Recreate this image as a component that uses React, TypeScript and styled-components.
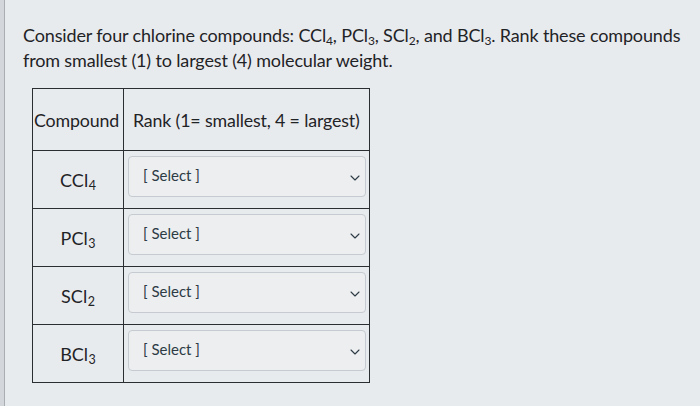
import React from "react";
import styled, { createGlobalStyle } from "styled-components";
import { ChevronDown } from "lucide-react";

const GlobalStyle = createGlobalStyle`
  html, body {
    margin: 0;
    padding: 0;
    background: #e8ebee;
  }
  body {
    font-family: Lato, "Open Sans", sans-serif;
    color: #1f2326;
  }
`;

const compounds = [
  { symbol: "CCl", sub: "4" },
  { symbol: "PCl", sub: "3" },
  { symbol: "SCl", sub: "2" },
  { symbol: "BCl", sub: "3" },
];

const App = () => {
  return (
    <Page>
      <GlobalStyle />
      <Question>
        Consider four chlorine compounds: CCl<sub>4</sub>, PCl<sub>3</sub>,
        SCl<sub>2</sub>, and BCl<sub>3</sub>. Rank these compounds from
        smallest (1) to largest (4) molecular weight.
      </Question>
      <Table>
        <thead>
          <tr>
            <HeadCell className="compound">Compound</HeadCell>
            <HeadCell className="rank">Rank (1= smallest, 4 = largest)</HeadCell>
          </tr>
        </thead>
        <tbody>
          {compounds.map((c) => (
            <tr key={c.symbol}>
              <NameCell>
                {c.symbol}
                <sub>{c.sub}</sub>
              </NameCell>
              <SelectCell>
                <SelectBox>
                  <span>[ Select ]</span>
                  <ChevronDown size={16} strokeWidth={1.6} />
                </SelectBox>
              </SelectCell>
            </tr>
          ))}
        </tbody>
      </Table>
    </Page>
  );
};

const Page = styled.div`
  width: 700px;
  height: 406px;
  box-sizing: border-box;
  padding: 23px 0 0 19px;
  border-left: 4px solid #d3d7db;
  box-shadow: inset 1px 0 0 #a9aeb3;
  overflow: hidden;
`;

const Question = styled.p`
  margin: 0;
  width: 670px;
  font-size: 18px;
  line-height: 25px;
  letter-spacing: -0.15px;
  > sub {
    font-size: 12px;
    vertical-align: -3px;
    line-height: 0;
  }
`;

const Table = styled.table`
  margin: 15px 0 0 9px;
  border-collapse: collapse;
  width: 338px;
  border: 1.5px solid #2b2e31;
  td,
  th {
    border: 1.5px solid #2b2e31;
  }
`;

const HeadCell = styled.th`
  height: 61px;
  font-size: 17.8px;
  font-weight: 400;
  text-align: left;
  padding: 0;
  letter-spacing: -0.15px;
  white-space: nowrap;
  &.compound {
    width: 89px;
    padding-left: 1px;
  }
  &.rank {
    padding-left: 9px;
  }
`;

const NameCell = styled.td`
  height: 58px;
  text-align: center;
  font-size: 18px;
  padding: 0;
  box-sizing: border-box;
  > sub {
    font-size: 12.5px;
    vertical-align: -3px;
    line-height: 0;
    margin-left: 0.5px;
  }
`;

const SelectCell = styled.td`
  padding: 5px 3px 11px 4px;
  vertical-align: top;
`;

const SelectBox = styled.div`
  height: 41px;
  box-sizing: border-box;
  border: 1px solid #c5cbd0;
  border-radius: 4px;
  background: #eceef0;
  display: flex;
  align-items: center;
  justify-content: space-between;
  padding: 0 2px 0 14px;
  font-size: 15px;
  color: #2d3b45;
  > span {
    margin-top: -3px;
  }
  > svg {
    color: #2d3b45;
    margin-top: 3px;
  }
`;

export default App;
